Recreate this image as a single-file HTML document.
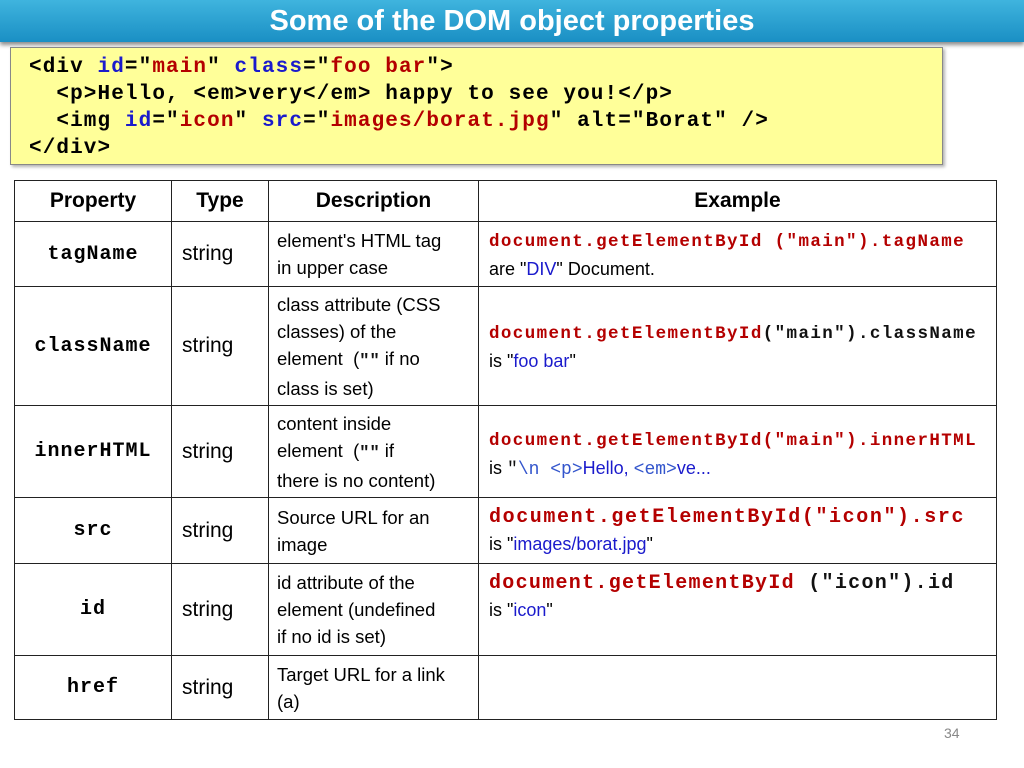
<!DOCTYPE html>
<html><head><style>
body{margin:0;width:1024px;height:768px;background:#fff;position:relative;overflow:hidden;font-family:"Liberation Sans",sans-serif;}
.title{position:absolute;left:0;top:0;width:1024px;height:42px;background:linear-gradient(#3fb4de,#1a8fc4);box-shadow:0 3px 4px rgba(0,0,0,.45);color:#fff;font-size:29px;font-weight:bold;text-align:center;line-height:42px;}
.code{position:absolute;left:10px;top:47px;width:933px;height:118px;background:#ffff99;border:1px solid #888;box-shadow:2px 2px 3px rgba(0,0,0,.3);font-family:"Liberation Mono",monospace;font-weight:bold;font-size:21px;line-height:27px;padding:6px 0 0 18px;box-sizing:border-box;white-space:pre;letter-spacing:1.1px}
.b{color:#1a1acc}.r{color:#b40000}
.c{position:absolute;border:1px solid #222;box-sizing:border-box;display:flex;align-items:center;}
.h{justify-content:center;font-weight:bold;font-size:21px}
.p{justify-content:center;font-family:"Liberation Mono",monospace;font-weight:bold;font-size:20px;letter-spacing:1px}
.t{font-size:21px;padding-left:10px}
.d{font-size:18.5px;line-height:27px;padding-left:8px;padding-right:2px;white-space:nowrap}
.e{font-size:18px;line-height:27px;padding-left:10px;display:block;white-space:nowrap}
.m{font-family:"Liberation Mono",monospace;font-weight:bold;color:#b40000}
.k{font-family:"Liberation Mono",monospace;font-weight:bold;color:#111}
.bl{color:#1a1acc}
.lm{font-family:"Liberation Mono",monospace;color:#3355cc}
.s1{font-size:17.5px;letter-spacing:1.4px}
</style></head><body>
<div class="title">Some of the DOM object properties</div>
<div class="code">&lt;div <span class="b">id</span>="<span class="r">main</span>" <span class="b">class</span>="<span class="r">foo bar</span>"&gt;
  &lt;p&gt;Hello, &lt;em&gt;very&lt;/em&gt; happy to see you!&lt;/p&gt;
  &lt;img <span class="b">id</span>="<span class="r">icon</span>" <span class="b">src</span>="<span class="r">images/borat.jpg</span>" alt="Borat" /&gt;
&lt;/div&gt;</div>

<div class="c h" style="left:14px;top:180px;width:158px;height:42px">Property</div>
<div class="c h" style="left:171px;top:180px;width:98px;height:42px">Type</div>
<div class="c h" style="left:268px;top:180px;width:211px;height:42px">Description</div>
<div class="c h" style="left:478px;top:180px;width:519px;height:42px">Example</div>

<div class="c p" style="left:14px;top:221px;width:158px;height:66px">tagName</div>
<div class="c t" style="left:171px;top:221px;width:98px;height:66px">string</div>
<div class="c d" style="left:268px;top:221px;width:211px;height:66px"><div>element's HTML tag<br>in upper case</div></div>
<div class="c e" style="left:478px;top:221px;width:519px;height:66px;padding-top:5px"><span class="m s1">document.getElementById ("main").tagName</span><br>are "<span class="bl">DIV</span>" Document.</div>

<div class="c p" style="left:14px;top:286px;width:158px;height:120px">className</div>
<div class="c t" style="left:171px;top:286px;width:98px;height:120px">string</div>
<div class="c d" style="left:268px;top:286px;width:211px;height:120px"><div>class attribute (CSS<br>classes) of the<br>element&nbsp; (<span class="k" style="font-size:17px">""</span> if no<br>class is set)</div></div>
<div class="c e" style="left:478px;top:286px;width:519px;height:120px;padding-top:32px"><span class="m s1">document.getElementById</span><span class="k s1">("main").className</span><br>is "<span class="bl">foo bar</span>"</div>

<div class="c p" style="left:14px;top:405px;width:158px;height:93px">innerHTML</div>
<div class="c t" style="left:171px;top:405px;width:98px;height:93px">string</div>
<div class="c d" style="left:268px;top:405px;width:211px;height:93px"><div>content inside<br>element&nbsp; (<span class="k" style="font-size:17px">""</span> if<br>there is no content)</div></div>
<div class="c e" style="left:478px;top:405px;width:519px;height:93px;padding-top:20px"><span class="m s1">document.getElementById("main").innerHTML</span><br>is <span class="k" style="font-weight:normal">"</span><span class="lm">\n &lt;p&gt;</span><span class="bl">Hello, </span><span class="lm">&lt;em&gt;</span><span class="bl">ve...</span></div>

<div class="c p" style="left:14px;top:497px;width:158px;height:67px">src</div>
<div class="c t" style="left:171px;top:497px;width:98px;height:67px">string</div>
<div class="c d" style="left:268px;top:497px;width:211px;height:67px"><div>Source URL for an<br>image</div></div>
<div class="c e" style="left:478px;top:497px;width:519px;height:67px;padding-top:5px"><span class="m" style="font-size:20px;letter-spacing:1.6px">document.getElementById("icon").src</span><br>is "<span class="bl">images/borat.jpg</span>"</div>

<div class="c p" style="left:14px;top:563px;width:158px;height:93px">id</div>
<div class="c t" style="left:171px;top:563px;width:98px;height:93px">string</div>
<div class="c d" style="left:268px;top:563px;width:211px;height:93px"><div>id attribute of the<br>element (undefined<br>if no id is set)</div></div>
<div class="c e" style="left:478px;top:563px;width:519px;height:93px;padding-top:5px"><span class="m" style="font-size:20px;letter-spacing:1.3px">document.getElementById</span><span class="k" style="font-size:20px;letter-spacing:1.3px"> ("icon").id</span><br>is "<span class="bl">icon</span>"</div>

<div class="c p" style="left:14px;top:655px;width:158px;height:65px">href</div>
<div class="c t" style="left:171px;top:655px;width:98px;height:65px">string</div>
<div class="c d" style="left:268px;top:655px;width:211px;height:65px"><div>Target URL for a link<br>(a)</div></div>
<div class="c e" style="left:478px;top:655px;width:519px;height:65px"></div>

<div style="position:absolute;left:944px;top:725px;font-size:14px;color:#888">34</div>
</body></html>
